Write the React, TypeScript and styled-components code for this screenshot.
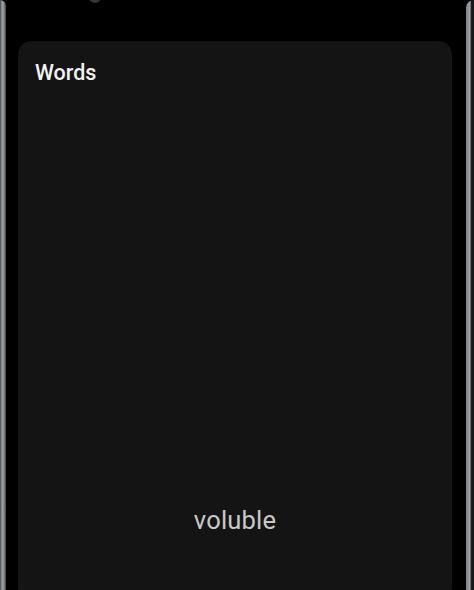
import styled, { createGlobalStyle } from "styled-components";

const GlobalStyle = createGlobalStyle`
  html, body {
    margin: 0;
    padding: 0;
    background: #000;
  }
  body {
    font-family: Roboto, "Liberation Sans", sans-serif;
  }
`;

const Screen = styled.div`
  position: relative;
  width: 474px;
  height: 590px;
  overflow: hidden;
  background: #000;
  display: flex;
`;

const Bezel = styled.div<{ side: "left" | "right" }>`
  flex: none;
  height: 100%;
  ${({ side }) =>
    side === "left"
      ? `
    width: 6px;
    margin-right: 12px;
    border-top-right-radius: 14px;
    background: linear-gradient(to right, #44464a, #9a9da3 35%, #8c8f94 65%, #3a3b3e);
  `
      : `
    width: 8px;
    margin-left: 14px;
    border-top-left-radius: 10px;
    background: linear-gradient(to right, #7c7f84, #9a9da2 45%, #5d6064 60%, #1c1c1d 65%, #141414);
  `}
`;

const Camera = styled.div`
  position: absolute;
  left: 89px;
  top: -9px;
  width: 12px;
  height: 12px;
  border-radius: 50%;
  background: #343434;
`;

const Inner = styled.div`
  flex: 1;
  display: flex;
  flex-direction: column;
  padding-top: 41px;
`;

const Card = styled.div`
  height: 560px;
  flex: none;
  background: #141414;
  border-radius: 14px;
  display: flex;
  flex-direction: column;
  padding: 19px 17px 0;
  box-sizing: border-box;
`;

const Title = styled.h1`
  margin: 0;
  font-size: 21.5px;
  line-height: 26px;
  font-weight: 500;
  color: #f2f2f2;
`;

const Body = styled.div`
  flex: 1;
  display: flex;
  align-items: flex-end;
  justify-content: center;
  padding-bottom: 66px;
`;

const Word = styled.div`
  font-size: 25.5px;
  line-height: 30px;
  color: #c8c8c8;
  letter-spacing: 0.2px;
`;

export default function App() {
  return (
    <>
      <GlobalStyle />
      <Screen>
        <Camera />
        <Bezel side="left" />
        <Inner>
          <Card>
            <Title>Words</Title>
            <Body>
              <Word>voluble</Word>
            </Body>
          </Card>
        </Inner>
        <Bezel side="right" />
      </Screen>
    </>
  );
}
